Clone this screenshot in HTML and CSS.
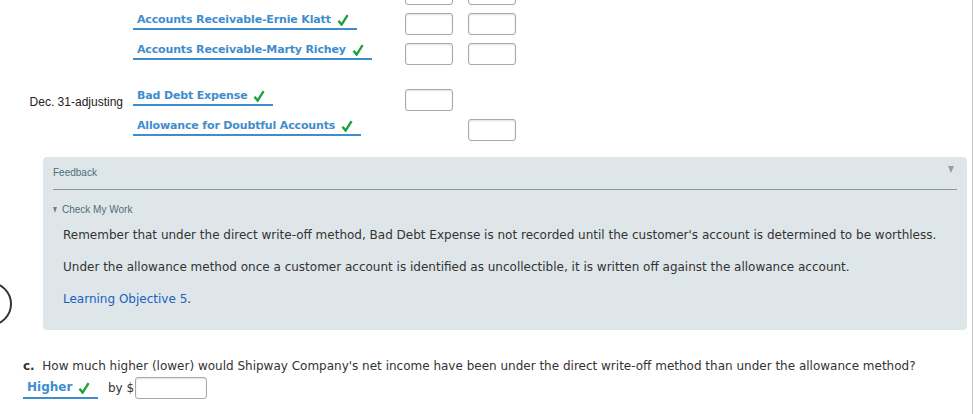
FILE: index.html
```html
<!DOCTYPE html>
<html>
<head>
<meta charset="utf-8">
<link rel="stylesheet" href="styles.css">
</head>
<body>
<div class="page">
  <span class="radio-edge"></span>
  <div class="journal">
    <div class="row">
      <div class="date"></div>
      <div class="acct"></div>
      <div class="amt"><span class="box"></span></div>
      <div class="amt"><span class="box"></span></div>
    </div>
    <div class="row">
      <div class="date"></div>
      <div class="acct"><span class="acct-line">Accounts Receivable-Ernie Klatt<svg class="check" viewBox="0 0 12 12"><path d="M1.5 6.8 L4.6 10.6 L10.6 1.2"/></svg></span></div>
      <div class="amt"><span class="box"></span></div>
      <div class="amt"><span class="box"></span></div>
    </div>
    <div class="row">
      <div class="date"></div>
      <div class="acct"><span class="acct-line">Accounts Receivable-Marty Richey<svg class="check" viewBox="0 0 12 12"><path d="M1.5 6.8 L4.6 10.6 L10.6 1.2"/></svg></span></div>
      <div class="amt"><span class="box"></span></div>
      <div class="amt"><span class="box"></span></div>
    </div>
    <div class="row row-gap">
      <div class="date">Dec. 31-adjusting</div>
      <div class="acct"><span class="acct-line">Bad Debt Expense<svg class="check" viewBox="0 0 12 12"><path d="M1.5 6.8 L4.6 10.6 L10.6 1.2"/></svg></span></div>
      <div class="amt"><span class="box"></span></div>
      <div class="amt"></div>
    </div>
    <div class="row">
      <div class="date"></div>
      <div class="acct"><span class="acct-line">Allowance for Doubtful Accounts<svg class="check" viewBox="0 0 12 12"><path d="M1.5 6.8 L4.6 10.6 L10.6 1.2"/></svg></span></div>
      <div class="amt"></div>
      <div class="amt"><span class="box"></span></div>
    </div>
  </div>

  <div class="feedback">
    <div class="fb-head">
      <span class="fb-title">Feedback</span>
      <span class="fb-toggle"></span>
    </div>
    <div class="cmw"><span class="cmw-tri"></span>Check My Work</div>
    <p class="fb-text">Remember that under the direct write-off method, Bad Debt Expense is not recorded until the customer's account is determined to be worthless.</p>
    <p class="fb-text">Under the allowance method once a customer account is identified as uncollectible, it is written off against the allowance account.</p>
    <p class="fb-text"><span class="lo">Learning Objective 5</span>.</p>
  </div>

  <p class="question"><b>c.</b>&nbsp; How much higher (lower) would Shipway Company's net income have been under the direct write-off method than under the allowance method?</p>
  <div class="answer">
    <span class="ans-line">Higher<svg class="check" viewBox="0 0 12 12"><path d="M1.5 6.8 L4.6 10.6 L10.6 1.2"/></svg></span>
    <span class="by">by $</span>
    <span class="ans-box"></span>
  </div>
</div>
</body>
</html>
```
FILE: styles.css
```css
* { box-sizing: border-box; }
html, body { margin: 0; padding: 0; background: #fff; }
body {
  font-family: "DejaVu Sans", Verdana, sans-serif;
  font-size: 12px;
  color: #333;
}
.page {
  position: relative;
  width: 973px;
  height: 414px;
  border-right: 1px solid #c4c4c4;
  overflow: hidden;
}
.radio-edge {
  position: absolute;
  left: -32px;
  top: 282px;
  width: 44px;
  height: 44px;
  border: 2px solid #333;
  border-radius: 50%;
}
.journal {
  margin-top: -22px;
  display: grid;
  grid-template-columns: 133px 272px 63px 47px;
}
.row { display: contents; }
.row > div { height: 30px; }
.row-gap > div { margin-top: 16px; }
.date {
  text-align: right;
  padding-right: 10px;
  padding-top: 10px;
  line-height: 16px;
  white-space: nowrap;
  font-family: "Liberation Sans", Arial, sans-serif;
  font-size: 12px;
  color: #222;
}
.acct { padding-top: 4px; }
.acct-line {
  display: inline-block;
  height: 18px;
  line-height: 16px;
  padding: 0 8px 0 4px;
  border-bottom: 2px solid #3f8dcd;
  color: #3f8dcd;
  font-weight: bold;
  font-size: 11px;
  letter-spacing: -0.15px;
  white-space: nowrap;
}
.check {
  width: 12px;
  height: 12px;
  margin-left: 6px;
  vertical-align: -3px;
  fill: none;
  stroke: #1ea33c;
  stroke-width: 2.4;
  stroke-linejoin: miter;
}
.amt { padding-top: 5px; }
.box, .ans-box {
  display: block;
  width: 48px;
  height: 22px;
  border: 1px solid #a8a8a8;
  border-radius: 3px;
  box-shadow: inset 0 1px 2px rgba(0,0,0,0.12);
  background: #fff;
}
.feedback {
  margin: 13px 0 0 43px;
  width: 924px;
  height: 173px;
  background: #dfe6e9;
  border-radius: 4px;
  padding: 10px 0 0 0;
}
.fb-head {
  margin: 0 10px;
  display: flex;
  justify-content: space-between;
  align-items: flex-start;
  border-bottom: 1px solid #8e979b;
  padding-bottom: 10px;
  font-family: "Liberation Sans", Arial, sans-serif;
  font-size: 10px;
  line-height: 12px;
  color: #4f6d79;
}
.fb-toggle {
  width: 0;
  height: 0;
  margin-top: -1px;
  margin-right: 3px;
  border-left: 3.5px solid transparent;
  border-right: 3.5px solid transparent;
  border-top: 7px solid #9a9a9a;
}
.cmw {
  margin: 14px 0 0 10px;
  display: flex;
  align-items: center;
  font-family: "Liberation Sans", Arial, sans-serif;
  font-size: 10px;
  line-height: 12px;
  color: #4f6d79;
}
.cmw-tri {
  width: 0;
  height: 0;
  margin-right: 5px;
  border-left: 2.5px solid transparent;
  border-right: 2.5px solid transparent;
  border-top: 6px solid #7c7c7c;
}
.fb-text {
  margin: 0 0 16px 20px;
  line-height: 16px;
}
.cmw + .fb-text { margin-top: 11px; }
.lo { color: #2060c0; }
.question {
  margin: 28px 0 0 23px;
  line-height: 16px;
  white-space: nowrap;
}
.question b { font-weight: bold; }
.answer {
  margin: 3px 0 0 23px;
  display: flex;
  align-items: flex-end;
}
.ans-line {
  display: inline-block;
  width: 75px;
  height: 20px;
  line-height: 16px;
  padding-left: 4px;
  border-bottom: 2px solid #3f8dcd;
  color: #3f8dcd;
  font-weight: bold;
  white-space: nowrap;
}
.by {
  margin-left: 10px;
  line-height: 16px;
  padding-bottom: 3px;
}
.ans-box {
  width: 72px;
  margin-left: 1px;
}
```
